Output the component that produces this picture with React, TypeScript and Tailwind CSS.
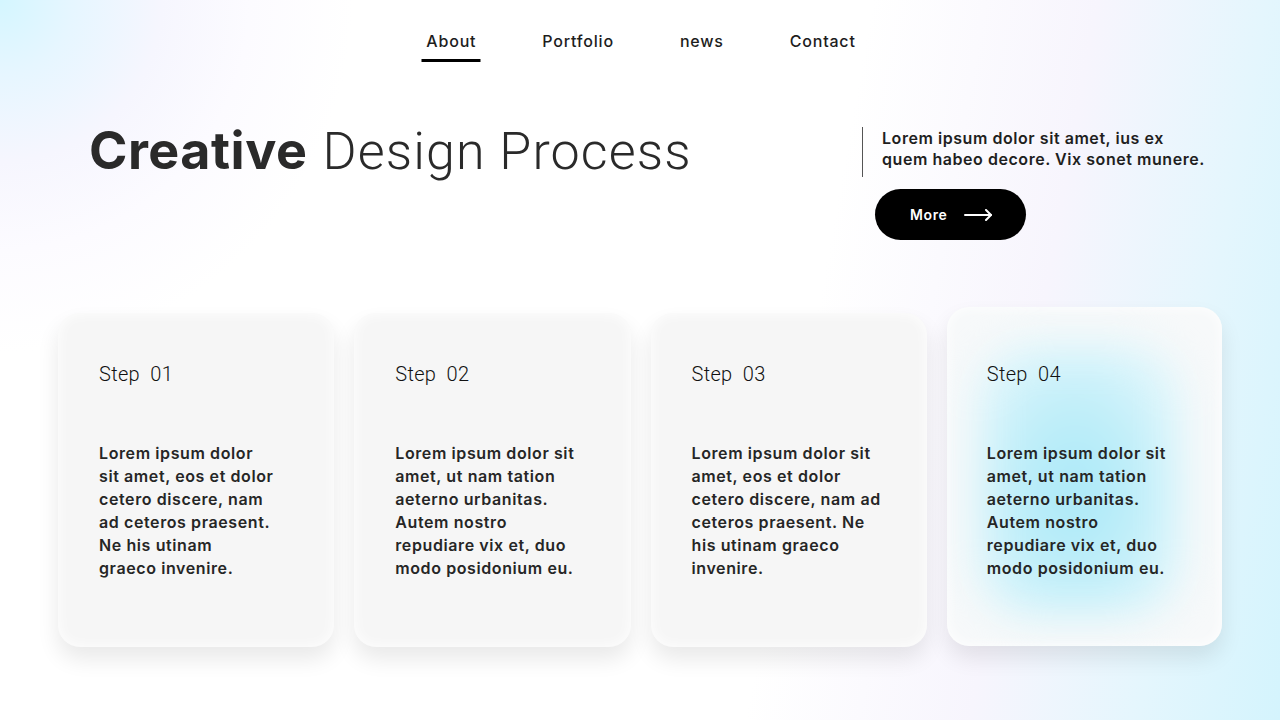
import React from 'react';

const steps = [
  {
    n: '01',
    lines: ['Lorem ipsum dolor', 'sit amet, eos et dolor', 'cetero discere, nam', 'ad ceteros praesent.', 'Ne his utinam', 'graeco invenire.'],
  },
  {
    n: '02',
    lines: ['Lorem ipsum dolor sit', 'amet, ut nam tation', 'aeterno urbanitas.', 'Autem nostro', 'repudiare vix et, duo', 'modo posidonium eu.'],
  },
  {
    n: '03',
    lines: ['Lorem ipsum dolor sit', 'amet, eos et dolor', 'cetero discere, nam ad', 'ceteros praesent. Ne', 'his utinam graeco', 'invenire.'],
  },
  {
    n: '04',
    lines: ['Lorem ipsum dolor sit', 'amet, ut nam tation', 'aeterno urbanitas.', 'Autem nostro', 'repudiare vix et, duo', 'modo posidonium eu.'],
    active: true,
  },
];

const navItems = ['About', 'Portfolio', 'news', 'Contact'];

function Arrow() {
  return (
    <svg width="29" height="12" viewBox="0 0 29 12" fill="none" stroke="white" strokeWidth="2" strokeLinecap="round" strokeLinejoin="round">
      <path d="M1 6h26" />
      <path d="M22 1l5 5-5 5" />
    </svg>
  );
}

export default function App() {
  return (
    <div className="relative min-h-screen w-full overflow-hidden bg-white bg-[radial-gradient(circle_at_0%_0%,#d4f6ff_0%,#e6f6ff_5%,#f6f6fe_11%,#fcfbff_17%,transparent_24%),linear-gradient(100deg,transparent_62%,#f7f5fd_78%,#e4f6fd_90%,#d4f4fd_100%)] font-['Inter',sans-serif] text-[#222]">
      {/* Nav */}
      <nav className="flex justify-center gap-[66px] pt-[31px] pl-[2px] text-[16px] font-medium tracking-[0.8px] text-[#1d1d1d]">
        {navItems.map((item, i) => (
          <div key={item} className="relative">
            <span className="block leading-[20px]">{item}</span>
            {i === 0 && <span className="absolute left-1/2 top-[28px] h-[3px] w-[59px] -translate-x-1/2 bg-black" />}
          </div>
        ))}
      </nav>

      {/* Header */}
      <div className="mt-[70px] flex justify-between pl-[89px] pr-[60px]">
        <h1 className="text-[52px] leading-[60px] tracking-[0.5px] text-[#2a2a2a]">
          <span className="font-bold">Creative</span>{' '}
          <span className="font-['Roboto',sans-serif] font-light tracking-[1.1px]">Design Process</span>
        </h1>
        <div className="w-[358px] pt-[6px]">
          <div className="border-l border-[#555] pl-[19px] text-[16px] font-semibold leading-[21px] tracking-[0.55px] text-[#1f1f1f]">
            <p className="pt-[1px] pb-[7px]">
              Lorem ipsum dolor sit amet, ius ex
              <br />
              quem habeo decore. Vix sonet munere.
            </p>
          </div>
          <button className="ml-[13px] mt-[12px] flex h-[51px] w-[151px] items-center gap-[17px] rounded-full bg-black pl-[35px] text-[14px] font-semibold tracking-[0.6px] text-white">
            More
            <Arrow />
          </button>
        </div>
      </div>

      {/* Cards */}
      <div className="mt-[67px] flex items-start gap-[20px] px-[58px]">
        {steps.map((s) => (
          <div
            key={s.n}
            className={
              s.active
                ? 'relative h-[339px] w-[276px] overflow-hidden rounded-[22px] bg-[#f7f9fa] shadow-[inset_0_0_14px_rgba(255,255,255,0.95),0_12px_22px_rgba(0,0,0,0.09)]'
                : 'relative mt-[6px] h-[334px] w-[277px] overflow-hidden rounded-[22px] bg-[#f6f6f6] shadow-[inset_0_0_14px_rgba(255,255,255,0.95),0_12px_22px_rgba(0,0,0,0.09)]'
            }
          >
            {s.active && (
              <div className="absolute left-[30px] top-[38px] h-[270px] w-[205px] rounded-[50px] bg-[radial-gradient(ellipse_at_48%_55%,#a9e9f8_0%,#bfeef9_40%,#dcf5fb_75%,#eef8fb_100%)] blur-[20px]" />
            )}
            <div className={s.active ? 'relative px-[40px] pt-[54px]' : 'relative px-[41px] pt-[48px]'}>
              <p className="font-['Roboto',sans-serif] text-[20px] font-light leading-[26px] tracking-[0.3px] text-[#111]">
                Step&nbsp; {s.n}
              </p>
              <p className="mt-[55px] text-[16px] font-semibold leading-[23px] tracking-[0.6px] text-[#262626]">
                {s.lines.map((l) => (
                  <span key={l} className="block whitespace-nowrap">
                    {l}
                  </span>
                ))}
              </p>
            </div>
          </div>
        ))}
      </div>
    </div>
  );
}
